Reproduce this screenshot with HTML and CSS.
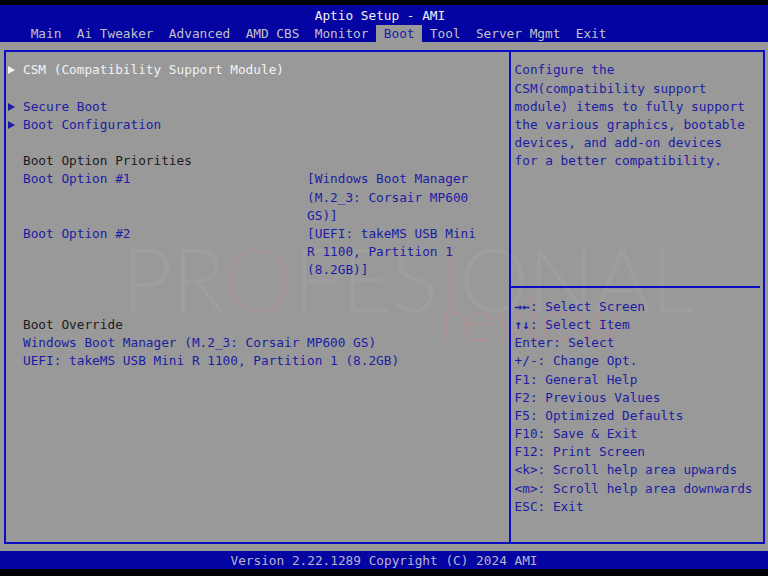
FILE: index.html
```html
<!DOCTYPE html>
<html>
  <head>
    <title>Aptio Setup - AMI</title>
    <link rel="stylesheet" href="styles.css">
  </head>
  <body>
    <div class="screen">
      <header class="top">
        <div class="title">Aptio Setup - AMI</div>
        <nav class="tabs">
          <span class="tab">Main</span>
          <span class="tab">Ai Tweaker</span>
          <span class="tab">Advanced</span>
          <span class="tab">AMD CBS</span>
          <span class="tab">Monitor</span>
          <span class="tab active">Boot</span>
          <span class="tab">Tool</span>
          <span class="tab">Server Mgmt</span>
          <span class="tab">Exit</span>
        </nav>
      </header>

      <main class="main">
        <div class="watermark">
          <span class="wm-word">PR<span class="wm-red">O</span>FES<span class="wm-red">I</span>ONAL</span>
          <span class="wm-review">review</span>
        </div>
        <div class="frame">
          <section class="items">
            <div class="line selected"><span class="arrow"></span><span>CSM (Compatibility Support Module)</span></div>
            <div class="line"></div>
            <div class="line link"><span class="arrow"></span><span>Secure Boot</span></div>
            <div class="line link"><span class="arrow"></span><span>Boot Configuration</span></div>
            <div class="line"></div>
            <div class="line plain">Boot Option Priorities</div>
            <div class="line option">
              <span class="label">Boot Option #1</span>
              <span class="value">[Windows Boot Manager (M.2_3: Corsair MP600 GS)]</span>
            </div>
            <div class="line option">
              <span class="label">Boot Option #2</span>
              <span class="value">[UEFI: takeMS USB Mini R 1100, Partition 1 (8.2GB)]</span>
            </div>
            <div class="line"></div>
            <div class="line"></div>
            <div class="line plain">Boot Override</div>
            <div class="line plain link">Windows Boot Manager (M.2_3: Corsair MP600 GS)</div>
            <div class="line plain link">UEFI: takeMS USB Mini R 1100, Partition 1 (8.2GB)</div>
          </section>

          <aside class="help">
            <div class="help-text">
              <div>Configure the</div>
              <div>CSM(compatibility support</div>
              <div>module) items to fully support</div>
              <div>the various graphics, bootable</div>
              <div>devices, and add-on devices</div>
              <div>for a better compatibility.</div>
            </div>
            <div class="sep"></div>
            <div class="keys">
              <div><b>&rarr;&larr;</b>: Select Screen</div>
              <div><b>&uarr;&darr;</b>: Select Item</div>
              <div>Enter: Select</div>
              <div>+/-: Change Opt.</div>
              <div>F1: General Help</div>
              <div>F2: Previous Values</div>
              <div>F5: Optimized Defaults</div>
              <div>F10: Save &amp; Exit</div>
              <div>F12: Print Screen</div>
              <div>&lt;k&gt;: Scroll help area upwards</div>
              <div>&lt;m&gt;: Scroll help area downwards</div>
              <div>ESC: Exit</div>
            </div>
          </aside>
        </div>
      </main>

      <footer class="foot">Version 2.22.1289 Copyright (C) 2024 AMI</footer>
    </div>
  </body>
</html>
```

FILE: styles.css
```css
:root {
  --lh: 18.19px;
  --nudge: 1.5px;
  --blue: #0404a2;
  --line: #0c0cc4;
  --gray: #999999;
  --text-blue: #1c1ca4;
}

* {
  box-sizing: border-box;
}

body {
  margin: 0;
  background: #000;
  font-family: "DejaVu Sans Mono", monospace;
  font-size: 12.76px;
  line-height: var(--lh);
}

.screen {
  width: 768px;
  height: 576px;
  padding-top: 5.3px;
}

.top {
  background: var(--blue);
  height: calc(var(--lh) * 2);
}

.title {
  height: var(--lh);
  padding-top: var(--nudge);
  padding-left: 41ch;
  color: #f2f2f2;
}

.tabs {
  display: flex;
  height: var(--lh);
  padding-top: var(--nudge);
  padding-left: 3ch;
  color: #c2c2c6;
}

.tab {
  padding: 0 1ch;
  white-space: nowrap;
}

.tab.active {
  background: var(--gray);
  color: var(--text-blue);
}

.main {
  position: relative;
  background: var(--gray);
  height: calc(var(--lh) * 28);
  padding: 8.3px 0 0 4px;
  overflow: hidden;
}

.frame {
  position: relative;
  display: flex;
  width: 761px;
  height: 493.7px;
  border: 2px solid var(--line);
}

.items {
  width: 505.3px;
  border-right: 2px solid var(--line);
  padding: calc(7.9px + var(--nudge)) 0 0 1.68px;
  color: var(--text-blue);
}

.line {
  display: flex;
  min-height: var(--lh);
  white-space: nowrap;
}

.selected {
  color: #f2f2f2;
}

.arrow {
  width: 2ch;
  display: flex;
  align-items: center;
}

.arrow::before {
  content: "";
  border-left: 7px solid currentColor;
  border-top: 4.5px solid transparent;
  border-bottom: 4.5px solid transparent;
}

.plain {
  padding-left: 2ch;
  color: #1c1c1c;
}

.plain.link {
  color: var(--text-blue);
}

.option {
  padding-left: 2ch;
  align-items: flex-start;
}

.label {
  width: 37ch;
}

.value {
  width: 23ch;
  white-space: normal;
}

.help {
  flex: 1;
  padding: calc(7.9px + var(--nudge)) 0 0 3.26px;
  color: var(--text-blue);
  white-space: nowrap;
}

.sep {
  height: var(--lh);
  margin: calc(var(--lh) * 6 - var(--nudge) - 0.5px) 2.7px 0 -3.26px;
  display: flex;
  align-items: center;
}

.sep::after {
  content: "";
  flex: 1;
  height: 2px;
  background: var(--line);
}

.keys {
  margin-top: calc(var(--nudge) + 0.5px);
}

.keys b {
  font-weight: bold;
}

.foot {
  height: var(--lh);
  padding-top: var(--nudge);
  background: var(--blue);
  color: #b6b6cc;
  text-align: center;
}

/* faint site watermark over the screen */
.watermark {
  position: absolute;
  left: 122px;
  top: 192px;
  font-family: Lato, "Open Sans", sans-serif;
  font-weight: 300;
  pointer-events: none;
}

.wm-word {
  display: block;
  font-size: 88px;
  line-height: 88px;
  letter-spacing: -1px;
  color: rgba(255, 255, 255, 0.05);
}

.wm-red {
  color: rgba(255, 110, 110, 0.09);
}

.wm-review {
  position: absolute;
  left: 318px;
  top: 52px;
  font-size: 64px;
  line-height: 64px;
  color: rgba(255, 110, 110, 0.16);
}
```
